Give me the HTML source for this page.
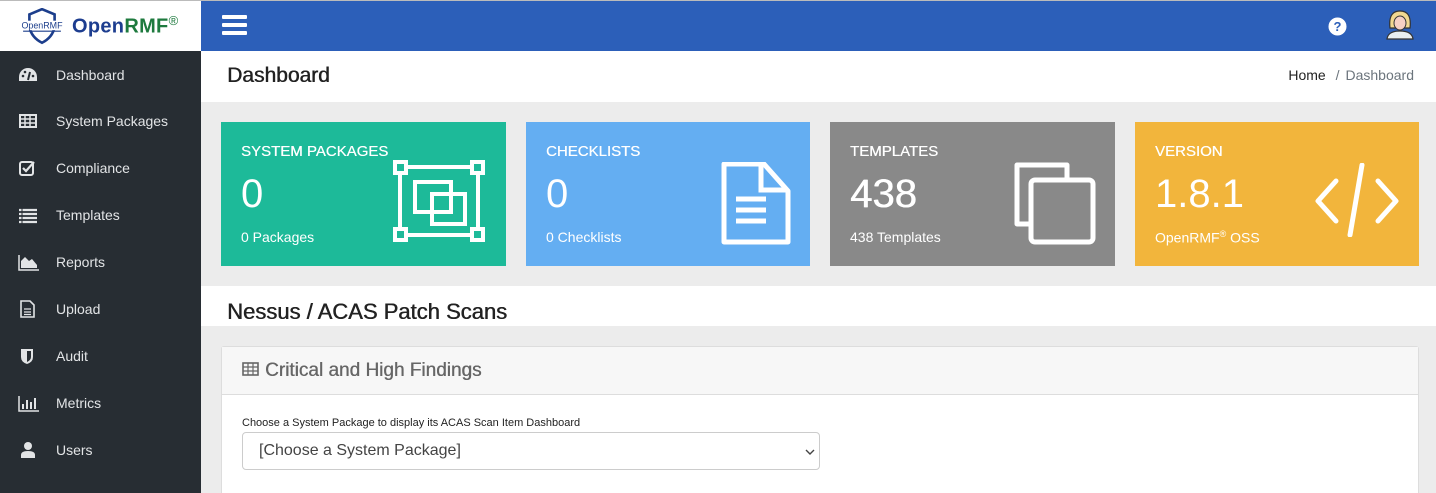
<!DOCTYPE html>
<html><head><meta charset="utf-8"><style>
*{box-sizing:border-box;margin:0;padding:0}
html{width:1436px;height:493px;overflow:hidden}
body{width:1436px;height:493px;overflow:hidden;font-family:"Liberation Sans",sans-serif;background:#ececec;position:relative}
.side{position:absolute;left:0;top:0;width:201px;height:493px;background:#272d33}
.logo{position:absolute;left:0;top:0;width:201px;height:51px;background:#fff;border-top:1px solid #bbb}
.nav{position:absolute;left:201px;top:0;right:0;height:51px;background:#2c5fb9;border-top:1px solid #bbb}
.item{position:absolute;left:0;width:201px;height:30px;color:#e2e4e6;font-size:14px}
.item span{position:absolute;left:56px;top:7px}
.item svg{position:absolute;left:18px;top:6px}
.hdr{position:absolute;left:201px;top:51px;right:0;height:51px;background:#fff}
.box{position:absolute;top:122px;height:144px;color:#fff}
.box .t{position:absolute;left:20px;top:21px;font-size:15px;text-shadow:0.3px 0 0 #fff}
.box .n{position:absolute;left:20px;top:50px;font-size:40px}
.box .s{position:absolute;left:20px;top:107px;font-size:14px}
.box svg{position:absolute}
</style></head><body>
<div class="side">
<div class="logo">
<svg width="42" height="38" viewBox="0 0 40 36" style="position:absolute;left:21px;top:7px"><path d="M8 6 L20 1 L32 6 V18 Q30 28 20 33 Q10 28 8 18Z" fill="none" stroke="#1c3e8c" stroke-width="2.5"/><rect x="1" y="12" width="38" height="9" fill="#fff"/><text x="20" y="19.5" font-size="8.5" text-anchor="middle" fill="#1c3e8c" font-family="Liberation Sans">OpenRMF</text><line x1="2" y1="22" x2="38" y2="22" stroke="#1c3e8c"/></svg>
<div style="position:absolute;left:72px;top:12px;font-size:20px;font-weight:bold;letter-spacing:.3px"><span style="color:#1d3d8f">Open</span><span style="color:#1e7a3e">RMF</span><sup style="color:#1e7a3e;font-size:13px;font-weight:normal">®</sup></div>
</div>
<div class="item" style="top:60px"><svg width="20" height="18" viewBox="0 0 20 18"><path d="M10 2A9 9 0 0 0 1 11v4h18v-4A9 9 0 0 0 10 2z" fill="#e2e4e6"/><circle cx="5" cy="10" r="1.3" fill="#272d33"/><circle cx="7" cy="6" r="1.3" fill="#272d33"/><circle cx="15" cy="10" r="1.3" fill="#272d33"/><path d="M10 14 L12 6" stroke="#272d33" stroke-width="2"/></svg><span>Dashboard</span></div>
<div class="item" style="top:106px"><svg width="20" height="18" viewBox="0 0 20 18"><rect x="2" y="3" width="16" height="12" fill="none" stroke="#e2e4e6" stroke-width="2"/><path d="M2 7h16M2 11h16M7 3v12M12 3v12" stroke="#e2e4e6" stroke-width="1.5"/></svg><span>System Packages</span></div>
<div class="item" style="top:153px"><svg width="20" height="18" viewBox="0 0 20 18"><rect x="2" y="3" width="13" height="13" rx="2" fill="none" stroke="#e2e4e6" stroke-width="2"/><path d="M5 9l3 3 8-9" fill="none" stroke="#e2e4e6" stroke-width="2.2"/></svg><span>Compliance</span></div>
<div class="item" style="top:200px"><svg width="20" height="18" viewBox="0 0 20 18"><path d="M1 4h18M1 8h18M1 12h18M1 16h18" stroke="#e2e4e6" stroke-width="2.3"/><path d="M4 2v16" stroke="#272d33" stroke-width="1"/></svg><span>Templates</span></div>
<div class="item" style="top:247px"><svg width="22" height="18" viewBox="0 0 22 18"><path d="M1 2v15h20" fill="none" stroke="#e2e4e6" stroke-width="1.5"/><path d="M3 15V8l4-4 4 4 3-2 5 6v3z" fill="#e2e4e6"/></svg><span>Reports</span></div>
<div class="item" style="top:294px"><svg width="20" height="18" viewBox="0 0 20 18"><path d="M3 1h9l4 4v12H3z" fill="none" stroke="#e2e4e6" stroke-width="1.6"/><path d="M6 9h7M6 12h7M6 14.5h7" stroke="#e2e4e6" stroke-width="1.3"/></svg><span>Upload</span></div>
<div class="item" style="top:341px"><svg width="20" height="18" viewBox="0 0 20 18"><path d="M3 2h12v8q0 5-6 7q-6-2-6-7z" fill="#e2e4e6"/><path d="M9 4h4v6q0 3-4 5z" fill="#272d33"/></svg><span>Audit</span></div>
<div class="item" style="top:388px"><svg width="22" height="18" viewBox="0 0 22 18"><path d="M1 2v15h20" fill="none" stroke="#e2e4e6" stroke-width="1.5"/><path d="M5 15v-5M9 15v-9M13 15v-7M17 15v-11" stroke="#e2e4e6" stroke-width="2"/></svg><span>Metrics</span></div>
<div class="item" style="top:435px"><svg width="20" height="18" viewBox="0 0 20 18"><circle cx="10" cy="5" r="4" fill="#e2e4e6"/><path d="M3 17v-3q0-4 7-4t7 4v3z" fill="#e2e4e6"/></svg><span>Users</span></div>
</div>
<div class="nav">
<div style="position:absolute;left:21px;top:14px;width:25px;height:4px;background:#fff;box-shadow:0 8px 0 #fff,0 16px 0 #fff;border-radius:1px"></div>
<svg width="19" height="19" viewBox="0 0 19 19" style="position:absolute;left:1127px;top:16px"><circle cx="9.5" cy="9.5" r="9" fill="#fff"/><text x="9.5" y="14" text-anchor="middle" font-size="13" font-weight="bold" fill="#2c5fb9" font-family="Liberation Sans">?</text></svg>
<svg width="30" height="32" viewBox="0 0 30 32" style="position:absolute;left:1184px;top:7px"><path d="M5 20q-2-17 10-17t10 17z" fill="#f0d890" stroke="#333" stroke-width="1.2"/><ellipse cx="15" cy="15" rx="6" ry="7" fill="#f5d0c4" stroke="#333" stroke-width="1"/><path d="M2 31q1-8 13-8t13 8z" fill="#e8eef0" stroke="#333" stroke-width="1.2"/></svg>
</div>
<div class="hdr">
<div style="position:absolute;left:26px;top:13px;font-size:21px;font-weight:500;color:#222;text-shadow:0.5px 0 0 #222">Dashboard</div>
<div style="position:absolute;right:22px;top:16px;font-size:14px;color:#222">Home <span style="color:#6c757d;padding:0 6px">/</span><span style="color:#6c757d">Dashboard</span></div>
</div>
<div class="box" style="left:221px;width:285px;background:#1dba99"><div class="t">SYSTEM PACKAGES</div><div class="n">0</div><div class="s">0 Packages</div>
<svg width="96" height="84" viewBox="0 0 96 84" style="left:172px;top:38px"><g fill="none" stroke="#fff" stroke-width="4"><rect x="7" y="7" width="78" height="68"/><rect x="22" y="22" width="36" height="30"/><rect x="39" y="34" width="33" height="30"/></g><g fill="#1dba99" stroke="#fff" stroke-width="4"><rect x="2" y="2" width="11" height="11"/><rect x="79" y="2" width="11" height="11"/><rect x="2" y="69" width="11" height="11"/><rect x="79" y="69" width="11" height="11"/></g></svg></div>
<div class="box" style="left:526px;width:284px;background:#64aef2"><div class="t">CHECKLISTS</div><div class="n">0</div><div class="s">0 Checklists</div>
<svg width="72" height="84" viewBox="0 0 72 84" style="left:194px;top:40px"><path d="M4 2h40l24 27v51H4z" fill="none" stroke="#fff" stroke-width="5" stroke-linejoin="round"/><path d="M41 4v24h26" fill="none" stroke="#fff" stroke-width="5"/><path d="M16 37h30M16 48h30M16 59h30" stroke="#fff" stroke-width="5"/></svg></div>
<div class="box" style="left:830px;width:285px;background:#898989"><div class="t">TEMPLATES</div><div class="n" style="text-shadow:0.6px 0 0 #fff">438</div><div class="s">438 Templates</div>
<svg width="84" height="84" viewBox="0 0 84 84" style="left:183px;top:39px"><path d="M16 63H4V4h50v14" fill="none" stroke="#fff" stroke-width="5" stroke-linejoin="round"/><rect x="18" y="19" width="62" height="62" rx="4" fill="none" stroke="#fff" stroke-width="5"/></svg></div>
<div class="box" style="left:1135px;width:284px;background:#f2b53c"><div class="t">VERSION</div><div class="n">1.8.1</div><div class="s">OpenRMF<sup style="font-size:9px">®</sup> OSS</div>
<svg width="86" height="74" viewBox="0 0 86 74" style="left:179px;top:41px"><path d="M22 18L4 38l18 20M64 18l18 20-18 20M48 2L36 72" fill="none" stroke="#fff" stroke-width="5" stroke-linecap="round" stroke-linejoin="round"/></svg></div>
<div style="position:absolute;left:201px;top:286px;right:0;height:40px;background:#fff"><div style="position:absolute;left:26px;top:13px;font-size:22px;color:#222;text-shadow:0.5px 0 0 #222">Nessus / ACAS Patch Scans</div></div>
<div style="position:absolute;left:221px;top:346px;width:1198px;height:160px;background:#fff;border:1px solid #ddd;border-radius:3px">
<div style="height:48px;background:#f7f7f7;border-bottom:1px solid #ddd;position:relative">
<svg width="17" height="14" viewBox="0 0 17 14" style="position:absolute;left:20px;top:15px"><rect x="1" y="1" width="15" height="12" fill="none" stroke="#666" stroke-width="1.6"/><path d="M1 5h15M1 9h15M6 1v12M11 1v12" stroke="#666" stroke-width="1.2"/></svg>
<div style="position:absolute;left:43px;top:13px;font-size:19px;color:#666;text-shadow:0.4px 0 0 #666">Critical and High Findings</div></div>
<div style="position:absolute;left:20px;top:70px;font-size:11px;color:#222">Choose a System Package to display its ACAS Scan Item Dashboard</div>
<div style="position:absolute;left:20px;top:85px;width:578px;height:38px;border:1px solid #ccc;border-radius:4px;font-size:16px;color:#444;padding:9px 16px">[Choose a System Package]<svg width="10" height="6" viewBox="0 0 10 6" style="position:absolute;right:4px;top:16px"><path d="M1 1l4 4 4-4" fill="none" stroke="#444" stroke-width="1.4"/></svg></div>
</div>
</body></html>
